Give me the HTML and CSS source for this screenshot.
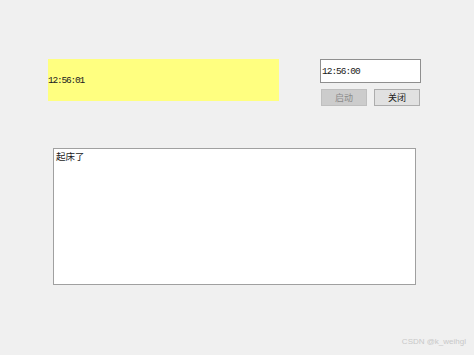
FILE: index.html
```html
<html lang="zh">
<head>
    <title>定时提醒</title>
    <meta charset="UTF-8">
    <meta name="viewport" content="width=device-width, initial-scale=1.0">
    <link rel="stylesheet" href="styles.css">
</head>
<body>
    <div class="window">
        <div class="topRow">
            <div class="clockPanel">12:56:01</div>
            <div class="controls">
                <input class="alarmInput" type="text" value="12:56:00">
                <div class="buttonRow">
                    <button class="winButton" disabled>启动</button>
                    <button class="winButton">关闭</button>
                </div>
            </div>
        </div>
        <textarea class="logBox">起床了</textarea>
    </div>
    <div class="watermark">CSDN @k_weihgl</div>
</body>
</html>
```

FILE: styles.css
```css
body {
    margin: 0;
    background-color: #f0f0f0;
    font-family: "Noto Sans CJK SC", sans-serif;
    width: 474px;
    height: 355px;
    overflow: hidden;
}

.window {
    padding: 59px 0 0 48px;
}

.topRow {
    display: flex;
    gap: 41px;
}

.clockPanel {
    width: 231px;
    height: 42px;
    background-color: #ffff80;
    display: flex;
    align-items: center;
    font-family: "Liberation Mono", monospace;
    font-size: 9.5px;
    letter-spacing: -1.2px;
    color: #202020;
    padding-top: 1px;
    box-sizing: border-box;
}

.controls {
    display: flex;
    flex-direction: column;
    gap: 6px;
}

.alarmInput {
    width: 101px;
    height: 24px;
    box-sizing: border-box;
    border: 1px solid #8f8f8f;
    background: #ffffff;
    margin: 0;
    padding: 0 0 0 1px;
    font-family: "Liberation Mono", monospace;
    font-size: 9.5px;
    letter-spacing: -1px;
    color: #202020;
    outline: none;
}

.buttonRow {
    display: flex;
    gap: 7px;
    padding-left: 1px;
}

.winButton {
    width: 46px;
    height: 17px;
    box-sizing: border-box;
    margin: 0;
    padding: 0;
    border: 1px solid #adadad;
    background-color: #e1e1e1;
    font-family: "Noto Sans CJK SC", sans-serif;
    font-size: 9px;
    line-height: 1;
    color: #1a1a1a;
}

.winButton:disabled {
    background-color: #cccccc;
    border-color: #bfbfbf;
    color: #8a8a8a;
}

.logBox {
    display: block;
    margin: 42px 0 0 5px;
    width: 363px;
    height: 137px;
    box-sizing: border-box;
    border: 1px solid #a0a0a0;
    background: #ffffff;
    padding: 1px 2px;
    resize: none;
    font-family: "Noto Sans CJK SC", sans-serif;
    font-size: 9.5px;
    line-height: 1.3;
    color: #1a1a1a;
    outline: none;
}

.watermark {
    position: absolute;
    right: 8px;
    bottom: 9px;
    font-family: "Liberation Sans", sans-serif;
    font-size: 8px;
    color: #c8c8c8;
}
```
